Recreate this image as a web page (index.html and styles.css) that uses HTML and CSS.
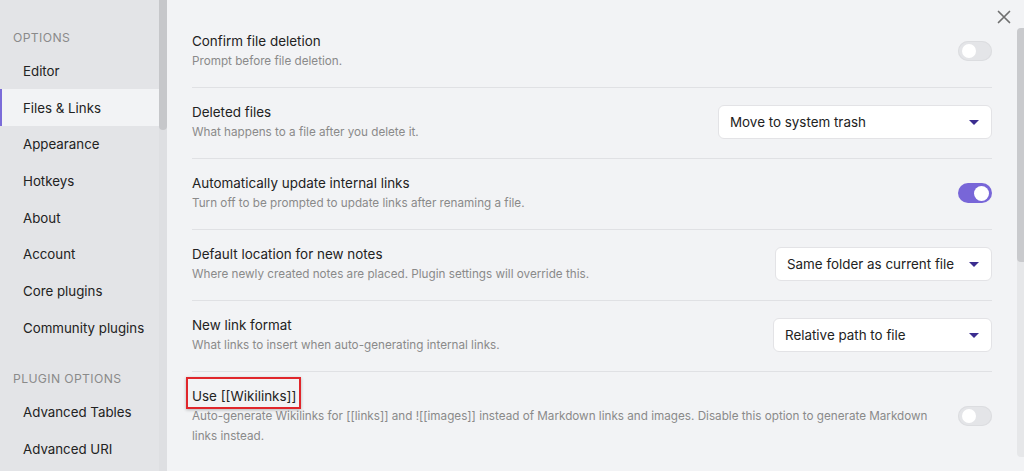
FILE: index.html
```html
<!DOCTYPE html>
<html>
<head>
<meta charset="utf-8">
<link rel="stylesheet" href="styles.css">
</head>
<body>
<div class="app">
  <aside class="sidebar">
    <nav class="nav">
      <div class="group-title">Options</div>
      <div class="nav-item">Editor</div>
      <div class="nav-item active">Files &amp; Links</div>
      <div class="nav-item">Appearance</div>
      <div class="nav-item">Hotkeys</div>
      <div class="nav-item">About</div>
      <div class="nav-item">Account</div>
      <div class="nav-item">Core plugins</div>
      <div class="nav-item">Community plugins</div>
      <div class="group-title second">Plugin options</div>
      <div class="nav-item">Advanced Tables</div>
      <div class="nav-item">Advanced URI</div>
    </nav>
    <div class="side-scroll"><div class="side-thumb"></div></div>
  </aside>
  <main class="content">
    <div class="settings">
      <div class="item">
        <div class="info">
          <div class="name">Confirm file deletion</div>
          <div class="desc">Prompt before file deletion.</div>
        </div>
        <div class="toggle"><span class="knob"></span></div>
      </div>
      <div class="item">
        <div class="info">
          <div class="name">Deleted files</div>
          <div class="desc">What happens to a file after you delete it.</div>
        </div>
        <div class="dropdown w-trash"><span>Move to system trash</span><span class="caret"></span></div>
      </div>
      <div class="item">
        <div class="info">
          <div class="name">Automatically update internal links</div>
          <div class="desc">Turn off to be prompted to update links after renaming a file.</div>
        </div>
        <div class="toggle on"><span class="knob"></span></div>
      </div>
      <div class="item">
        <div class="info">
          <div class="name">Default location for new notes</div>
          <div class="desc">Where newly created notes are placed. Plugin settings will override this.</div>
        </div>
        <div class="dropdown w-folder"><span>Same folder as current file</span><span class="caret"></span></div>
      </div>
      <div class="item">
        <div class="info">
          <div class="name">New link format</div>
          <div class="desc">What links to insert when auto-generating internal links.</div>
        </div>
        <div class="dropdown w-path"><span>Relative path to file</span><span class="caret"></span></div>
      </div>
      <div class="item">
        <div class="info">
          <div class="name"><span class="highlight">Use [[Wikilinks]]</span></div>
          <div class="desc">Auto-generate Wikilinks for [[links]] and ![[images]] instead of Markdown links and images. Disable this option to generate Markdown links instead.</div>
        </div>
        <div class="toggle"><span class="knob"></span></div>
      </div>
    </div>
    <div class="main-scroll"><div class="main-thumb"></div></div>
    <div class="close" aria-label="Close">
      <svg width="14" height="14" viewBox="0 0 14 14"><path d="M1.5 1.5 L12.5 12.5 M12.5 1.5 L1.5 12.5" stroke="#6f6f6f" stroke-width="1.7" stroke-linecap="round" fill="none"/></svg>
    </div>
  </main>
</div>
</body>
</html>
```
FILE: styles.css
```css
* { box-sizing: border-box; }
html, body { margin: 0; padding: 0; }
body {
  width: 1024px;
  height: 471px;
  overflow: hidden;
  font-family: Inter, "Noto Sans", "Liberation Sans", sans-serif;
  color: #222222;
  background: #f2f3f5;
}
.app {
  display: flex;
  height: 471px;
}
.sidebar {
  display: flex;
  width: 167px;
  flex: none;
  background: #e3e4e7;
}
.nav {
  width: 159px;
  padding-top: 28px;
}
.group-title {
  height: 20px;
  line-height: 20px;
  padding-left: 13px;
  margin-bottom: 4.7px;
  font-size: 12.2px;
  letter-spacing: 0.03em;
  text-transform: uppercase;
  color: #8a8a8a;
}
.group-title.second {
  margin-top: 22.7px;
}
.nav-item {
  height: 36.7px;
  display: flex;
  align-items: center;
  padding-left: 21px;
  font-size: 13.3px;
  color: #222222;
  border-left: 2px solid transparent;
}
.nav-item.active {
  background: #f2f3f5;
  border-left-color: #7b6cd9;
}
.side-scroll {
  width: 8px;
  background: #dedfe2;
}
.side-thumb {
  height: 130px;
  background: #c6c7ca;
  border-radius: 0 0 4px 4px;
}
.content {
  position: relative;
  flex: 1;
  display: flex;
  background: #f2f3f5;
}
.settings {
  flex: 1;
  padding: 17px 25px 0 25px;
}
.item {
  display: flex;
  align-items: center;
  padding: 14.2px 0 15.3px;
  border-top: 1px solid #e0e1e4;
}
.item:first-child {
  border-top: none;
  padding-top: 14px;
}
.info {
  flex: 1 1 auto;
  margin-right: 16px;
}
.name {
  font-size: 13.45px;
  line-height: 20px;
  color: #222222;
}
.desc {
  font-size: 11.7px;
  line-height: 20.5px;
  color: #8a8a8a;
}
.highlight {
  position: relative;
}
.highlight::after {
  content: "";
  position: absolute;
  left: -6px;
  top: -11px;
  right: -5px;
  bottom: -5px;
  border: 2px solid #e0262b;
  box-shadow: 0 1px 3px rgba(0,0,0,0.25);
}
.toggle {
  flex: none;
  position: relative;
  width: 34px;
  height: 20px;
  border-radius: 10px;
  background: #e4e5e8;
  box-shadow: inset 0 0 0 1px #dcdde0;
}
.toggle .knob {
  position: absolute;
  top: 3px;
  left: 4px;
  width: 14px;
  height: 14px;
  border-radius: 50%;
  background: #ffffff;
}
.toggle.on {
  background: #7866d8;
  box-shadow: none;
}
.toggle.on .knob {
  left: auto;
  right: 3px;
  width: 15px;
  height: 15px;
  top: 2.5px;
}
.dropdown {
  flex: none;
  height: 34px;
  display: flex;
  align-items: center;
  justify-content: space-between;
  padding: 0 12px 0 11px;
  background: #ffffff;
  border: 1px solid #e3e3e6;
  border-radius: 6px;
  font-size: 13.4px;
  color: #222222;
}
.w-trash { width: 274px; }
.w-folder { width: 217px; }
.w-path { width: 219px; }
.caret {
  width: 0;
  height: 0;
  border-left: 5px solid transparent;
  border-right: 5px solid transparent;
  border-top: 5px solid #3b2d8f;
}
.main-scroll {
  flex: none;
  width: 7px;
  margin-top: 28px;
  height: 429px;
  background: #e6e7e9;
  border-radius: 4px 0 0 4px;
}
.main-thumb {
  height: 234px;
  background: #c9cacd;
  border-radius: 4px 0 0 4px;
}
.close {
  position: absolute;
  top: 10px;
  right: 13px;
  width: 14px;
  height: 14px;
  display: flex;
}
```
